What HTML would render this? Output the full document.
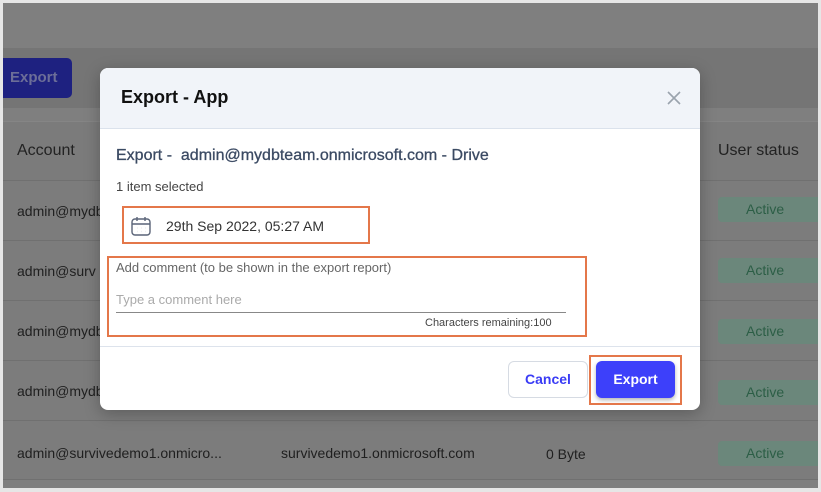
<!DOCTYPE html>
<html><head><style>
*{box-sizing:border-box;margin:0;padding:0}
body{width:821px;height:492px;overflow:hidden;background:#e6e6e6;font-family:"Liberation Sans",Arial,sans-serif;position:relative}
#bg{position:absolute;left:3px;top:3px;width:815px;height:485px;background:#7f7f7f;overflow:hidden}
.band{position:absolute;left:0;top:45px;width:100%;height:60px;background:#757575}
.hdr{position:absolute;left:0;top:118px;width:100%;height:60px;background:#7b7b7b;border-top:1px solid #858585}
.row{position:absolute;left:0;width:100%;height:60px;border-top:1px solid #707070;background:#7c7c7c}
.t{position:absolute;color:#1f1f1f;font-size:14px}
.badge{position:absolute;left:715px;width:110px;height:25px;border-radius:4px;background:#6b877b;color:#2c5e46;font-size:14px;line-height:25px;padding-left:28px}
.ebtn{position:absolute;left:0;top:55px;width:69px;height:40px;background:#1e2180;border-radius:0 5px 5px 0;color:#6c6e98;font-weight:bold;font-size:15px;line-height:40px;padding-left:7px}
#modal{position:absolute;left:100px;top:68px;width:600px;height:342px;background:#fff;border-radius:8px;overflow:hidden;box-shadow:0 4px 16px rgba(0,0,0,.25)}
#mh{height:61px;background:#f1f4f9;border-bottom:1px solid #dbe2ec;position:relative}
#mh h2{position:absolute;left:21px;top:19px;font-size:18px;font-weight:bold;color:#111}
.x{position:absolute;left:565px;top:21px;width:18px;height:18px}
.or{position:absolute;border:2px solid #e4774a}
</style></head><body>
<div id="bg">
<div class="band"></div>
<div class="ebtn">Export</div>
<div class="hdr"></div>
<div class="t" style="left:14px;top:139px;font-size:16px;color:#222">Account</div>
<div class="t" style="left:715px;top:139px;font-size:16px;color:#222">User status</div>
<div class="row" style="top:177px"></div>
<div class="row" style="top:237px"></div>
<div class="row" style="top:297px"></div>
<div class="row" style="top:357px"></div>
<div class="row" style="top:417px;border-bottom:1px solid #707070"></div>
<div class="t" style="left:14px;top:200px">admin@mydb</div>
<div class="t" style="left:14px;top:260px">admin@surv</div>
<div class="t" style="left:14px;top:320px">admin@mydb</div>
<div class="t" style="left:14px;top:380px">admin@mydb</div>
<div class="t" style="left:14px;top:442px">admin@survivedemo1.onmicro...</div>
<div class="t" style="left:278px;top:442px">survivedemo1.onmicrosoft.com</div>
<div class="t" style="left:543px;top:443px">0 Byte</div>
<div class="badge" style="top:194px">Active</div>
<div class="badge" style="top:255px">Active</div>
<div class="badge" style="top:316px">Active</div>
<div class="badge" style="top:377px">Active</div>
<div class="badge" style="top:438px">Active</div>
</div>
<div id="modal">
<div id="mh"><h2>Export - App</h2>
<svg class="x" viewBox="0 0 18 18"><path d="M3 3L15 15M15 3L3 15" stroke="#9aa3ad" stroke-width="1.6"/></svg></div>
<div style="position:absolute;left:16px;top:79px;font-size:16px;color:#3b4a63;-webkit-text-stroke:0.3px #3b4a63">Export -&nbsp; admin@mydbteam.onmicrosoft.com - Drive</div>
<div style="position:absolute;left:16px;top:111px;font-size:13px;color:#444">1 item selected</div>
<svg style="position:absolute;left:30px;top:147px" width="22" height="22" viewBox="0 0 22 22" fill="none" stroke="#5a6478" stroke-width="1.4"><rect x="2" y="4" width="18" height="16" rx="3"/><path d="M2 9H20M7 2V6M15 2V6"/><path d="M7 13h.1M11 13h.1M15 13h.1M7 16.5h.1M11 16.5h.1M15 16.5h.1" stroke-width="1.6"/></svg>
<div style="position:absolute;left:66px;top:150px;font-size:14px;color:#333">29th Sep 2022, 05:27 AM</div>
<div style="position:absolute;left:16px;top:192px;font-size:13px;color:#666">Add comment (to be shown in the export report)</div>
<div style="position:absolute;left:16px;top:224px;font-size:13px;color:#aaa">Type a comment here</div>
<div style="position:absolute;left:16px;top:244px;width:450px;height:1px;background:#888"></div>
<div style="position:absolute;left:325px;top:249px;font-size:11px;color:#444">Characters remaining:100</div>
<div style="position:absolute;left:0;top:278px;width:600px;height:1px;background:#dde3ec"></div>
<div style="position:absolute;left:408px;top:293px;width:80px;height:37px;border:1px solid #d6dbe3;border-radius:6px;color:#3a3cf5;font-weight:bold;font-size:14px;text-align:center;line-height:35px">Cancel</div>
<div style="position:absolute;left:496px;top:293px;width:79px;height:37px;background:#3d40fa;border-radius:6px;color:#fff;font-weight:bold;font-size:14px;text-align:center;line-height:37px;box-shadow:0 2px 4px rgba(0,0,0,.3)">Export</div>
</div>
<div class="or" style="left:122px;top:206px;width:248px;height:38px"></div>
<div class="or" style="left:107px;top:256px;width:480px;height:81px"></div>
<div class="or" style="left:589px;top:355px;width:93px;height:50px"></div>
</body></html>
